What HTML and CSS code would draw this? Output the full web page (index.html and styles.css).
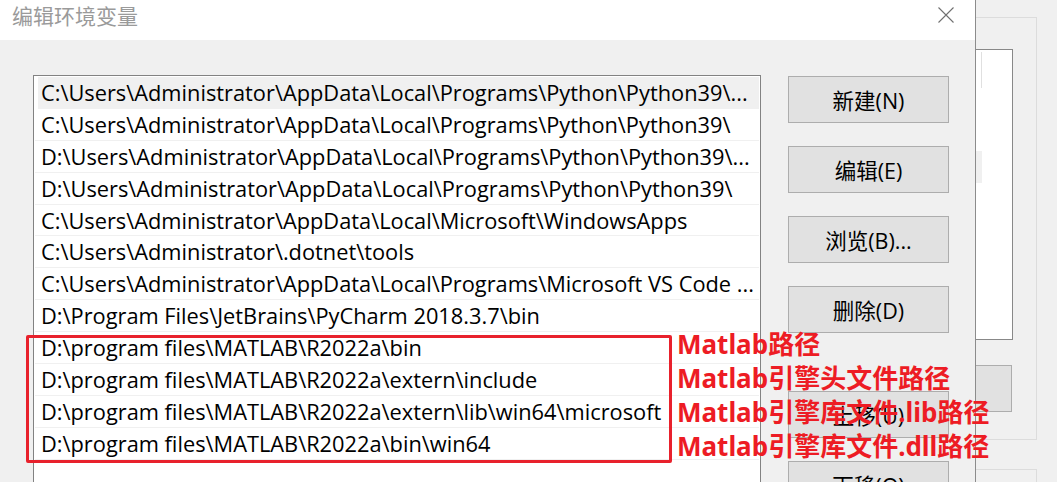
FILE: index.html
```html
<!DOCTYPE html>
<html lang="zh-CN">
<head>
<meta charset="utf-8">
<title>编辑环境变量</title>
<link rel="stylesheet" href="styles.css">
</head>
<body>
<div class="screen">
  <div class="dialog">
    <div class="titlebar">
      <span class="title">编辑环境变量</span>
      <svg class="close" width="16" height="16" viewBox="0 0 16 16"><path d="M0.5 0.5 L15.5 15.5 M15.5 0.5 L0.5 15.5" stroke="#707070" stroke-width="1.1" fill="none"/></svg>
    </div>
    <div class="body">
      <div class="list">
        <div class="row sel">C:\Users\Administrator\AppData\Local\Programs\Python\Python39\...</div>
        <div class="row">C:\Users\Administrator\AppData\Local\Programs\Python\Python39\</div>
        <div class="row">D:\Users\Administrator\AppData\Local\Programs\Python\Python39\...</div>
        <div class="row">D:\Users\Administrator\AppData\Local\Programs\Python\Python39\</div>
        <div class="row">C:\Users\Administrator\AppData\Local\Microsoft\WindowsApps</div>
        <div class="row">C:\Users\Administrator\.dotnet\tools</div>
        <div class="row">C:\Users\Administrator\AppData\Local\Programs\Microsoft VS Code ...</div>
        <div class="row">D:\Program Files\JetBrains\PyCharm 2018.3.7\bin</div>
        <div class="row">D:\program files\MATLAB\R2022a\bin</div>
        <div class="row">D:\program files\MATLAB\R2022a\extern\include</div>
        <div class="row">D:\program files\MATLAB\R2022a\extern\lib\win64\microsoft</div>
        <div class="row">D:\program files\MATLAB\R2022a\bin\win64</div>
      </div>
      <div class="buttons">
        <div class="btn">新建(N)</div>
        <div class="btn">编辑(E)</div>
        <div class="btn">浏览(B)...</div>
        <div class="btn">删除(D)</div>
        <div class="btn group">上移(U)</div>
        <div class="btn">下移(O)</div>
      </div>
      <div class="redbox"></div>
      <div class="notes">
        <div class="note">Matlab路径</div>
        <div class="note">Matlab引擎头文件路径</div>
        <div class="note">Matlab引擎库文件.lib路径</div>
        <div class="note">Matlab引擎库文件.dll路径</div>
      </div>
    </div>
  </div>
  <div class="parent">
    <div class="groupbox">
      <div class="plist">
        <div class="pline"></div>
        <div class="psel"></div>
      </div>
      <div class="pbtn"></div>
    </div>
    <div class="groupbox second"></div>
  </div>
</div>
</body>
</html>
```

FILE: styles.css
```css
html, body {
  margin: 0;
  padding: 0;
  background: #f0f0f0;
}
.screen {
  width: 1057px;
  height: 482px;
  overflow: hidden;
  display: flex;
  font-family: "Open Sans", "Noto Sans CJK SC", sans-serif;
}
.dialog {
  width: 975px;
  flex: none;
  border-right: 1px solid #8c8c8c;
  display: flex;
  flex-direction: column;
  background: #f0f0f0;
}
.titlebar {
  height: 40px;
  background: #ffffff;
  display: flex;
  align-items: flex-start;
  justify-content: space-between;
  padding: 0 21px 0 12px;
  flex: none;
}
.title {
  font-family: "Noto Sans CJK SC", sans-serif;
  font-size: 21px;
  line-height: 28px;
  color: #9a9a9a;
  margin-top: 1px;
}
.close {
  margin-top: 7px;
}
.body {
  position: relative;
  flex: 1;
  display: flex;
  align-items: flex-start;
  padding: 35px 0 0 33px;
  gap: 27px;
}
.list {
  width: 724px;
  height: 420px;
  border: 1px solid #828282;
  background: #ffffff;
  padding: 1px 1px 0 1px;
  flex: none;
}
.row {
  height: 31.9px;
  box-sizing: border-box;
  border-bottom: 1px solid #f0f0f0;
  padding-left: 6px;
  font-size: 21.8px;
  line-height: 32px;
  color: #000000;
  white-space: nowrap;
  overflow: hidden;
}
.row.sel {
  background: #f0f0f0;
  margin-left: 3px;
  padding-left: 3px;
}
.buttons {
  display: flex;
  flex-direction: column;
  gap: 23px;
  margin-top: 1px;
}
.btn {
  width: 159px;
  height: 45px;
  border: 1px solid #adadad;
  background: #e1e1e1;
  display: flex;
  align-items: center;
  justify-content: center;
  font-size: 21.5px;
  color: #000000;
}
.btn.group {
  margin-top: 35px;
}
.redbox {
  position: absolute;
  left: 26px;
  top: 295px;
  width: 640px;
  height: 122px;
  border: 3px solid #e8212c;
  border-radius: 2px;
}
.notes {
  position: absolute;
  left: 677px;
  top: 287px;
}
.note {
  font-family: "Noto Sans", "Noto Sans CJK SC", sans-serif;
  font-weight: 700;
  font-size: 26px;
  line-height: 34px;
  color: #ed1c24;
  white-space: nowrap;
}
.parent {
  flex: 1;
  overflow: hidden;
  background: #f0f0f0;
}
.groupbox {
  margin-top: 17px;
  width: 60px;
  height: 421px;
  border: 1px solid #dcdcdc;
  border-left: none;
}
.groupbox.second {
  margin-top: 29px;
  height: 40px;
}
.plist {
  margin-top: 31px;
  width: 36px;
  height: 289px;
  background: #ffffff;
  border: 1px solid #888888;
  border-left: none;
  position: relative;
}
.pline {
  margin-left: 5px;
  margin-top: 2px;
  width: 1px;
  height: 36px;
  background: #e0e0e0;
}
.psel {
  margin-top: 63px;
  width: 6px;
  height: 32px;
  background: #f0f0f0;
}
.pbtn {
  margin-top: 25px;
  width: 35px;
  height: 45px;
  background: #e1e1e1;
  border: 1px solid #adadad;
  border-left: none;
}
```
